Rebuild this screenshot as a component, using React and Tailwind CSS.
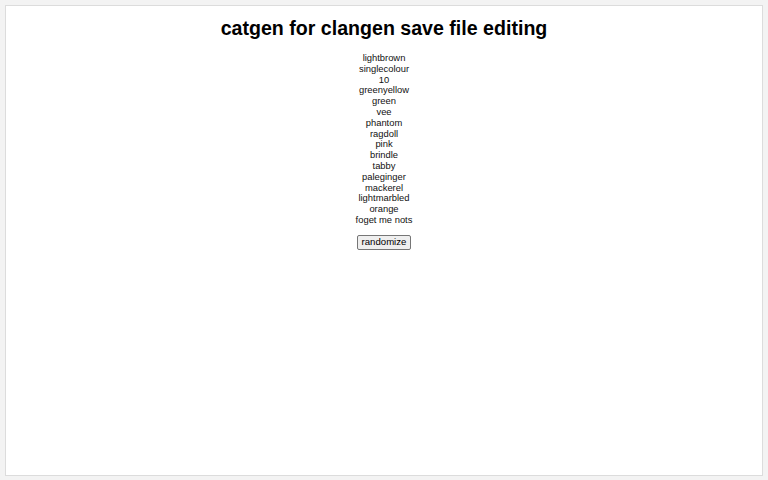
import React from 'react';

const TRAITS = [
  'lightbrown',
  'singlecolour',
  '10',
  'greenyellow',
  'green',
  'vee',
  'phantom',
  'ragdoll',
  'pink',
  'brindle',
  'tabby',
  'paleginger',
  'mackerel',
  'lightmarbled',
  'orange',
  'foget me nots',
];

export default function App() {
  return (
    <div className="w-[768px] h-[480px] bg-[#f3f3f3] p-[5px] font-['Liberation_Sans',Arial,sans-serif] text-black">
      <div className="h-[471px] w-[758px] bg-white border border-[#dcdcdc] flex flex-col items-center">
        <h1 className="mt-[11px] text-[19.6px] leading-[23px] font-bold">catgen for clangen save file editing</h1>
        <ul className="mt-[13px] flex flex-col items-center text-[9.4px] leading-[10.8px] text-[#111]">
          {TRAITS.map((t, i) => (
            <li key={i}>{t}</li>
          ))}
        </ul>
        <button
          type="button"
          className="mt-[9px] h-[15px] px-[4px] text-[9.6px] leading-[12px] border border-[#767676] rounded-[2px] bg-[#efefef]"
        >
          randomize
        </button>
      </div>
    </div>
  );
}
